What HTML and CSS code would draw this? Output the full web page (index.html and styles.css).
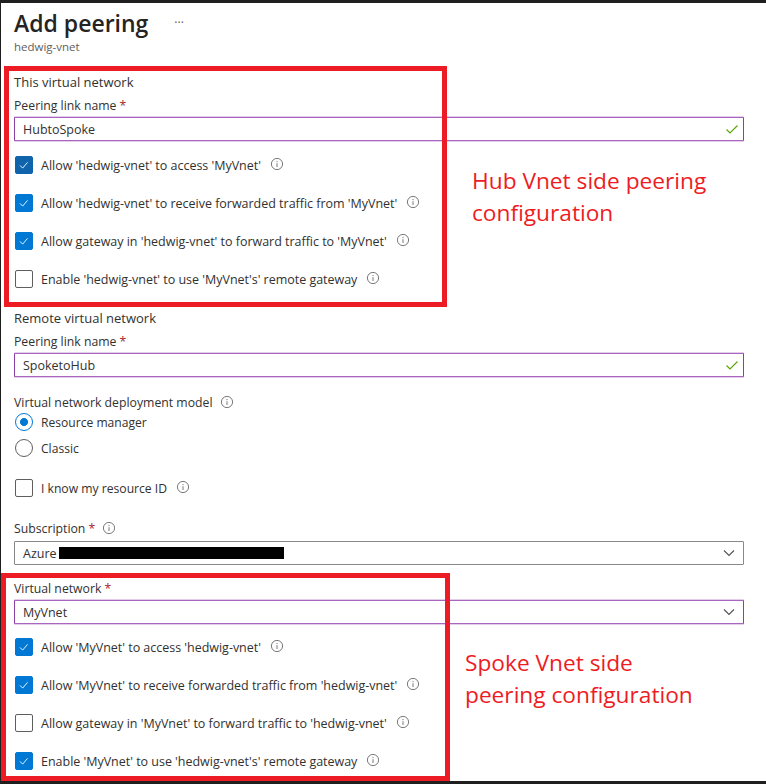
FILE: index.html
```html
<!DOCTYPE html>
<html lang="en">
  <head>
    <meta charset="UTF-8" />
    <title>Add peering</title>
    <link rel="stylesheet" href="styles.css">
  </head>
  <body>
    <svg class="defs" width="0" height="0">
      <symbol id="info" viewBox="0 0 14 14">
        <circle cx="7" cy="7" r="5.6" fill="none" stroke="#7a7a7a" stroke-width="1" />
        <rect x="6.5" y="6.2" width="1" height="3.8" fill="#7a7a7a" />
        <rect x="6.5" y="4" width="1" height="1.1" fill="#7a7a7a" />
      </symbol>
      <symbol id="tick" viewBox="0 0 18 18">
        <path d="M4.5 9.5 L7.5 12.5 L13 6" fill="none" stroke="#fff" stroke-width="1" />
      </symbol>
      <symbol id="valid" viewBox="0 0 12 9">
        <path d="M0.5 4.5 L4 8 L11.5 0.5" fill="none" stroke="#57a300" stroke-width="1.1" />
      </symbol>
      <symbol id="chevron" viewBox="0 0 12 8">
        <path d="M1 1.5 L6 6.5 L11 1.5" fill="none" stroke="#505050" stroke-width="1.1" />
      </symbol>
    </svg>

    <div class="page">
      <div class="title-row">
        <h1 class="page-title">Add peering</h1>
        <span class="more">···</span>
      </div>
      <div class="subtitle">hedwig-vnet</div>

      <div class="section-title first">This virtual network</div>
      <div class="form-label">Peering link name <span class="req">*</span></div>
      <div class="input input-valid">
        <span>HubtoSpoke</span>
        <svg class="valid-icon"><use href="#valid" /></svg>
      </div>

      <div class="check-list">
        <div class="check-row">
          <span class="box on focus"><svg><use href="#tick" /></svg></span>
          <span>Allow 'hedwig-vnet' to access 'MyVnet'</span>
          <svg class="info"><use href="#info" /></svg>
        </div>
        <div class="check-row">
          <span class="box on"><svg><use href="#tick" /></svg></span>
          <span>Allow 'hedwig-vnet' to receive forwarded traffic from 'MyVnet'</span>
          <svg class="info"><use href="#info" /></svg>
        </div>
        <div class="check-row">
          <span class="box on"><svg><use href="#tick" /></svg></span>
          <span>Allow gateway in 'hedwig-vnet' to forward traffic to 'MyVnet'</span>
          <svg class="info"><use href="#info" /></svg>
        </div>
        <div class="check-row">
          <span class="box"></span>
          <span>Enable 'hedwig-vnet' to use 'MyVnet's' remote gateway</span>
          <svg class="info"><use href="#info" /></svg>
        </div>
      </div>

      <div class="section-title remote">Remote virtual network</div>
      <div class="form-label">Peering link name <span class="req">*</span></div>
      <div class="input input-valid">
        <span>SpoketoHub</span>
        <svg class="valid-icon"><use href="#valid" /></svg>
      </div>

      <div class="form-label model-label">
        Virtual network deployment model
        <svg class="info"><use href="#info" /></svg>
      </div>
      <div class="radio-row">
        <span class="radio on"></span>
        <span>Resource manager</span>
      </div>
      <div class="radio-row">
        <span class="radio"></span>
        <span>Classic</span>
      </div>

      <div class="check-row resource-row">
        <span class="box"></span>
        <span>I know my resource ID</span>
        <svg class="info"><use href="#info" /></svg>
      </div>

      <div class="form-label sub-label">
        Subscription <span class="req">*</span>
        <svg class="info"><use href="#info" /></svg>
      </div>
      <div class="input input-select">
        <span class="azure">Azure <span class="redacted"></span></span>
        <svg class="chevron"><use href="#chevron" /></svg>
      </div>

      <div class="form-label vnet-label">Virtual network <span class="req">*</span></div>
      <div class="input input-valid vnet-input">
        <span>MyVnet</span>
        <svg class="chevron"><use href="#chevron" /></svg>
      </div>

      <div class="check-list spoke-list">
        <div class="check-row">
          <span class="box on"><svg><use href="#tick" /></svg></span>
          <span>Allow 'MyVnet' to access 'hedwig-vnet'</span>
          <svg class="info"><use href="#info" /></svg>
        </div>
        <div class="check-row">
          <span class="box on"><svg><use href="#tick" /></svg></span>
          <span>Allow 'MyVnet' to receive forwarded traffic from 'hedwig-vnet'</span>
          <svg class="info"><use href="#info" /></svg>
        </div>
        <div class="check-row">
          <span class="box"></span>
          <span>Allow gateway in 'MyVnet' to forward traffic to 'hedwig-vnet'</span>
          <svg class="info"><use href="#info" /></svg>
        </div>
        <div class="check-row">
          <span class="box on"><svg><use href="#tick" /></svg></span>
          <span>Enable 'MyVnet' to use 'hedwig-vnet's' remote gateway</span>
          <svg class="info"><use href="#info" /></svg>
        </div>
      </div>
    </div>

    <div class="callout-box hub-box"></div>
    <div class="callout-text hub-text">Hub Vnet side peering<br>configuration</div>
    <div class="callout-box spoke-box"></div>
    <div class="callout-text spoke-text">Spoke Vnet side<br>peering configuration</div>
  </body>
</html>
```

FILE: styles.css
```css
html,
body {
  margin: 0;
  height: 784px;
  overflow: hidden;
}
body {
  position: relative;
  font-family: "Open Sans", "Liberation Sans", sans-serif;
  font-size: 12.5px;
  color: #323130;
  background: #fff;
}
.defs {
  position: absolute;
}
.page {
  height: 784px;
  box-sizing: border-box;
  border-top: 3px solid #1f1f1f;
  border-bottom: 3px solid #1f1f1f;
  border-left: 1px solid #1f1f1f;
  padding-left: 13px;
  padding-right: 22px;
}
.title-row {
  display: flex;
  align-items: center;
  height: 40px;
}
.page-title {
  margin: 0;
  font-size: 23px;
  font-weight: 600;
  line-height: 40px;
  color: #252423;
}
.more {
  margin-left: 26px;
  margin-bottom: 2px;
  font-size: 12px;
  color: #605e5c;
}
.subtitle {
  height: 16px;
  margin-top: -4px;
  line-height: 16px;
  font-size: 11.5px;
  color: #605e5c;
}
.section-title {
  height: 18px;
  line-height: 18px;
  font-size: 13px;
}
.section-title.first {
  margin-top: 18px;
}
.section-title.remote {
  margin-top: 21px;
}
.form-label {
  display: flex;
  align-items: center;
  gap: 3px;
  height: 18px;
  line-height: 18px;
  margin-top: 5px;
  font-size: 12.25px;
}
.section-title + .form-label {
  margin-top: 6px;
}
.req {
  color: #a4262c;
}
.input {
  display: flex;
  align-items: center;
  justify-content: space-between;
  box-sizing: border-box;
  height: 24px;
  margin-top: 2px;
  padding: 0 8px;
  background: #fff;
  border: 1px solid #8a8886;
  border-radius: 1px;
}
.input-valid {
  border-color: #a866be #8a3fa5;
  box-shadow: 0 -1px 0 #e3cdea, 0 1px 0 #e3cdea;
}
.input-select {
  margin-top: 3px;
}
.valid-icon {
  width: 12px;
  height: 9px;
  margin-right: -3px;
}
.chevron {
  width: 12px;
  height: 8px;
}
.check-list {
  display: flex;
  flex-direction: column;
  gap: 20px;
  margin-top: 15px;
}
.spoke-list {
  margin-top: 14px;
}
.check-row {
  display: flex;
  align-items: center;
  height: 18px;
  letter-spacing: -0.02px;
}
.box {
  flex: none;
  box-sizing: border-box;
  width: 18px;
  height: 18px;
  margin: 0 8px 0 1px;
  border: 1px solid #605e5c;
  border-radius: 2px;
}
.box.on {
  background: #0078d4;
  border-color: #0078d4;
}
.box.focus {
  background: #0f64ab;
  border-color: #0f64ab;
}
.box svg {
  display: block;
  width: 16px;
  height: 16px;
}
.info {
  flex: none;
  width: 14px;
  height: 14px;
  margin-left: 9px;
  margin-top: -2px;
}
.form-label .info {
  margin-left: 4px;
}
.model-label {
  margin-top: 17px;
}
.radio-row {
  display: flex;
  align-items: center;
  height: 18px;
  margin-top: 1px;
  font-size: 12.1px;
}
.radio-row + .radio-row {
  margin-top: 8px;
}
.radio {
  flex: none;
  box-sizing: border-box;
  width: 18px;
  height: 18px;
  margin: 0 8px 0 1px;
  border: 1px solid #605e5c;
  border-radius: 50%;
}
.radio.on {
  border-color: #0078d4;
  background: radial-gradient(circle, #0078d4 0 3.7px, #fff 4.2px);
}
.resource-row {
  margin-top: 22px;
  font-size: 12.2px;
}
.sub-label {
  margin-top: 23px;
}
.azure {
  display: flex;
  align-items: center;
  gap: 2px;
}
.redacted {
  display: inline-block;
  width: 225px;
  height: 12px;
  background: #000;
}
.vnet-label {
  margin-top: 15px;
}
.vnet-input {
  margin-top: 2px;
}
.callout-box {
  position: absolute;
  box-sizing: border-box;
  border: 5px solid #ed1c24;
}
.hub-box {
  left: 4px;
  top: 66px;
  width: 443px;
  height: 241px;
}
.spoke-box {
  left: 1px;
  top: 573px;
  width: 449px;
  height: 208px;
}
.callout-text {
  position: absolute;
  font-size: 22.7px;
  line-height: 32px;
  color: #ed1c24;
}
.hub-text {
  left: 472px;
  top: 165px;
}
.spoke-text {
  left: 465px;
  top: 647px;
}
```
